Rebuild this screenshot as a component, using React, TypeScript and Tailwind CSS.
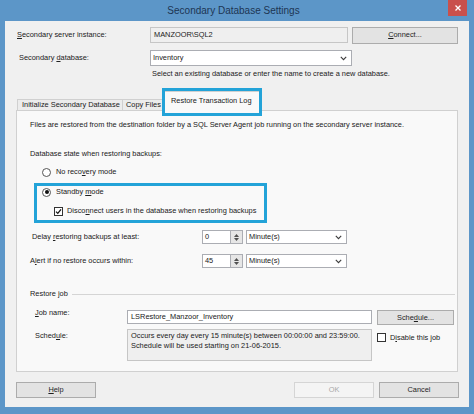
import React from "react";

const Chevron = () => (
  <svg width="7" height="5" viewBox="0 0 7 5" className="shrink-0">
    <path d="M0.8 0.8 L3.5 3.6 L6.2 0.8" fill="none" stroke="#3c3c3c" strokeWidth="1.1" />
  </svg>
);

const Combo = ({ w, text }: { w: string; text: string }) => (
  <div className={`${w} h-[14px] bg-white border border-[#abadb3] flex items-center justify-between pl-[2px] pr-[4px]`}>
    <span>{text}</span>
    <Chevron />
  </div>
);

const Spin = ({ value }: { value: string }) => (
  <div className="flex">
    <div className="w-[29px] h-[14px] bg-white border border-[#abadb3] flex items-center pl-[2px]">{value}</div>
    <div className="w-[12px] h-[14px] bg-[#e6e6e6] border border-l-0 border-[#abadb3] flex flex-col items-center justify-center gap-[1px]">
      <svg width="5" height="3" viewBox="0 0 5 3"><path d="M0 3 L2.5 0 L5 3 Z" fill="#505050" /></svg>
      <svg width="5" height="3" viewBox="0 0 5 3"><path d="M0 0 L2.5 3 L5 0 Z" fill="#505050" /></svg>
    </div>
  </div>
);

const Radio = ({ on }: { on?: boolean }) => (
  <div className="w-[9px] h-[9px] rounded-full border border-[#555] bg-white flex items-center justify-center shrink-0">
    {on && <div className="w-[4px] h-[4px] rounded-full bg-[#111]" />}
  </div>
);

const Check = ({ on }: { on?: boolean }) => (
  <div className="w-[9px] h-[9px] border border-[#333] bg-white flex items-center justify-center shrink-0">
    {on && (
      <svg width="7" height="7" viewBox="0 0 7 7">
        <path d="M1 3.6 L2.8 5.4 L6 1.4" fill="none" stroke="#111" strokeWidth="1.3" />
      </svg>
    )}
  </div>
);

const Btn = ({ children, w, disabled, h = "h-[16px]" }: { children: React.ReactNode; w: string; disabled?: boolean; h?: string }) => (
  <div
    className={`${w} ${h} flex items-center justify-center border ${
      disabled ? "border-[#d5d5d5] bg-[#f4f4f4] text-[#a8a8a8]" : "border-[#acacac] bg-[#e3e3e3] text-[#1e1e1e]"
    }`}
  >
    {children}
  </div>
);

export default function App() {
  return (
    <div className="w-[474px] h-[414px] bg-[#5c96c8] flex flex-col font-['Liberation_Sans',Arial,sans-serif] overflow-hidden">
      {/* Title bar */}
      <div className="h-[21px] flex items-start shrink-0">
        <div className="flex-1" />
        <div className="h-[21px] flex items-center text-[10px] text-[#1d3553] leading-none pt-[1px]">Secondary Database Settings</div>
        <div className="flex-1 flex justify-end pr-[7px]">
          <div className="w-[19px] h-[16px] bg-[#c9504c] flex items-center justify-center">
            <svg width="6" height="6" viewBox="0 0 6 6">
              <path d="M0.5 0.5 L5.5 5.5 M5.5 0.5 L0.5 5.5" stroke="#fff" strokeWidth="1.3" />
            </svg>
          </div>
        </div>
      </div>

      {/* Client area */}
      <div className="mx-[5px] h-[386px] bg-[#f0f0f0] relative flex flex-col text-[7.4px] text-[#202020] leading-none shrink-0">
        {/* Row 1 */}
        <div className="mt-[6px] h-[16px] flex items-center">
          <div className="w-[145px] pl-[12px]">
            <u>S</u>econdary server instance:
          </div>
          <div className="w-[198px] h-[16px] border border-[#c6c6c6] bg-[#efefef] flex items-center pl-[3px]">{"MANZOOR\\SQL2"}</div>
          <div className="ml-[4px]">
            <Btn w="w-[106px]" h="h-[17px]">
              <span>
                <u>C</u>onnect...
              </span>
            </Btn>
          </div>
        </div>

        {/* Row 2 */}
        <div className="mt-[7px] h-[16px] flex items-center">
          <div className="w-[145px] pl-[14px]">
            Secondary <u>d</u>atabase:
          </div>
          <div className="w-[202px] h-[16px] bg-white border border-[#abadb3] flex items-center justify-between pl-[2px] pr-[4px]">
            <span>Inventory</span>
            <Chevron />
          </div>
        </div>
        <div className="mt-[2px] h-[12px] flex items-center pl-[147px]">
          Select an existing database or enter the name to create a new database.
        </div>

        {/* Tabs */}
        <div className="mt-[10px] h-[20px] flex items-end pl-[12px] relative z-10">
          <div className="w-[106px] h-[11px] border border-b-0 border-[#d0d0d0] bg-[#ececec] flex items-center pl-[4px]">
            Initialize Secondary Database
          </div>
          <div className="w-[40px] h-[11px] border border-b-0 border-l-0 border-[#d0d0d0] bg-[#ececec] flex items-center pl-[3px] overflow-hidden whitespace-nowrap">
            Copy Files
          </div>
          <div className="w-[97px] h-[20px] -mb-[1px] border border-b-0 border-[#d0d0d0] bg-[#f9f9f9] flex items-start pt-[5px] pl-[7px]">
            Restore Transaction Log
          </div>
        </div>

        {/* Panel */}
        <div className="ml-[11px] w-[442px] h-[262px] border border-[#d0d0d0] bg-[#f9f9f9] flex flex-col">
          <div className="mt-[9px] h-[10px] flex items-center pl-[13px]">
            Files are restored from the destination folder by a SQL Server Agent job running on the secondary server instance.
          </div>
          <div className="mt-[19px] h-[10px] flex items-center pl-[13px]">Database state when restoring backups:</div>
          <div className="mt-[8px] h-[10px] flex items-center pl-[25px] gap-[5px]">
            <Radio />
            <span>
              No reco<u>v</u>ery mode
            </span>
          </div>
          <div className="mt-[10px] h-[10px] flex items-center pl-[25px] gap-[5px]">
            <Radio on />
            <span>
              Standby <u>m</u>ode
            </span>
          </div>
          <div className="mt-[9px] h-[10px] flex items-center pl-[37px] gap-[4px]">
            <Check on />
            <span>
              Disco<u>n</u>nect users in the database when restoring backups
            </span>
          </div>

          <div className="mt-[14px] h-[14px] flex items-center">
            <div className="w-[185px] pl-[15px]">
              Delay <u>r</u>estoring backups at least:
            </div>
            <Spin value="0" />
            <div className="ml-[3px]">
              <Combo w="w-[101px]" text="Minute(s)" />
            </div>
          </div>
          <div className="mt-[10px] h-[14px] flex items-center">
            <div className="w-[185px] pl-[13px]">
              A<u>l</u>ert if no restore occurs within:
            </div>
            <Spin value="45" />
            <div className="ml-[3px]">
              <Combo w="w-[101px]" text="Minute(s)" />
            </div>
          </div>

          {/* Restore job group */}
          <div className="mt-[21px] h-[10px] flex items-center pl-[13px] pr-[2px]">
            <span>Restore job</span>
            <div className="flex-1 ml-[4px] h-px bg-[#d5d5d5]" />
          </div>
          <div className="mt-[9px] flex items-start">
            <div className="w-[110px] pl-[18px] h-[10px] flex items-center">
              <u>J</u>ob name:
            </div>
            <div className="mt-[2px] w-[245px] h-[14px] bg-white border border-[#abadb3] flex items-center pl-[3px]">
              LSRestore_Manzoor_Inventory
            </div>
            <div className="mt-[2px] ml-[5px]">
              <Btn w="w-[77px]" h="h-[15px]">
                <span>
                  Sche<u>d</u>ule...
                </span>
              </Btn>
            </div>
          </div>
          <div className="mt-[4px] flex items-start">
            <div className="w-[110px] pl-[18px] mt-[2px] h-[10px] flex items-center">
              Sched<u>u</u>le:
            </div>
            <div className="w-[245px] h-[32px] bg-[#efefef] border border-[#c6c6c6] pl-[3px] pt-[1px] leading-[10px]">
              <div>Occurs every day every 15 minute(s) between 00:00:00 and 23:59:00.</div>
              <div>Schedule will be used starting on 21-06-2015.</div>
            </div>
            <div className="ml-[5px] mt-[4px] flex items-center gap-[4px]">
              <Check />
              <span>
                D<u>i</u>sable this job
              </span>
            </div>
          </div>
        </div>

        {/* Bottom buttons */}
        <div className="mt-[10px] flex items-center pl-[11px] pr-[10px]">
          <Btn w="w-[80px]">
            <span>
              <u>H</u>elp
            </span>
          </Btn>
          <div className="flex-1" />
          <Btn w="w-[80px]" disabled>
            OK
          </Btn>
          <div className="ml-[5px]">
            <Btn w="w-[80px]">Cancel</Btn>
          </div>
        </div>

        {/* Highlight overlays */}
        <div className="absolute left-[157px] top-[67px] w-[100px] h-[28px] border-[3px] border-[#23a3d8] z-20 pointer-events-none" />
        <div className="absolute left-[29px] top-[162px] w-[233px] h-[40px] border-[3px] border-[#23a3d8] z-20 pointer-events-none" />
      </div>
    </div>
  );
}
